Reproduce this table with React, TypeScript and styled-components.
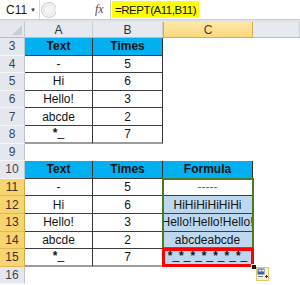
import React from 'react'
import styled, { createGlobalStyle } from 'styled-components'

const ROW_H = 17.6
const HEAD_H = 16
const ROWHEAD_W = 25
const COL_W = [68, 70, 90]

type Fill = 'none' | 'blue' | 'sky'
type Bottom = 'none' | 'dark' | 'gray'

interface ICell {
  text?: React.ReactNode
  fill?: Fill
  bold?: boolean
  line?: boolean
  bottom?: Bottom
  muted?: boolean
}

interface IRow {
  n: number
  sel?: boolean
  cells: ICell[]
}

const head = (text: string): ICell => ({ text, fill: 'blue', bold: true, line: true, bottom: 'dark' })
const body = (text: React.ReactNode, bottom: Bottom = 'dark', fill: Fill = 'none'): ICell => ({
  text,
  fill,
  line: true,
  bottom,
})

const Star = () => (
  <>
    <StarSP>*</StarSP>
    <UnderSP>_</UnderSP>
  </>
)

const ROWS: IRow[] = [
  { n: 3, cells: [head('Text'), head('Times'), {}] },
  { n: 4, cells: [body('-'), body('5'), {}] },
  { n: 5, cells: [body('Hi'), body('6'), {}] },
  { n: 6, cells: [body('Hello!'), body('3'), {}] },
  { n: 7, cells: [body('abcde'), body('2'), {}] },
  { n: 8, cells: [body(<Star />, 'gray'), body('7', 'gray'), {}] },
  { n: 9, cells: [{}, {}, {}] },
  { n: 10, cells: [head('Text'), head('Times'), head('Formula')] },
  { n: 11, sel: true, cells: [body('-'), body('5'), { ...body('-----'), muted: true }] },
  { n: 12, sel: true, cells: [body('Hi'), body('6'), body('HiHiHiHiHiHi', 'dark', 'sky')] },
  { n: 13, sel: true, cells: [body('Hello!'), body('3'), body('Hello!Hello!Hello!', 'dark', 'sky')] },
  { n: 14, sel: true, cells: [body('abcde'), body('2'), body('abcdeabcde', 'dark', 'sky')] },
  {
    n: 15,
    sel: true,
    cells: [
      body(<Star />, 'gray'),
      body('7', 'gray'),
      body(
        <>
          {Array.from({ length: 7 }).map((_, i) => (
            <Star key={i} />
          ))}
        </>,
        'gray',
        'sky'
      ),
    ],
  },
  { n: 16, cells: [{}, {}, {}] },
]

const rowTop = (n: number) => HEAD_H + (n - 3) * ROW_H
const colC = ROWHEAD_W + COL_W[0] + COL_W[1]

export default function App(): JSX.Element {
  return (
    <>
      <GlobalSCP />
      <FormulaBarSCP>
        <NameBoxSCP>
          <span>C11</span>
          <CaretSCP>▼</CaretSCP>
        </NameBoxSCP>
        <GripSCP>
          <svg width="16" height="18" viewBox="0 0 16 18">
            <circle cx="9" cy="9" r="7.5" fill="#f4f5f7" stroke="#c4c9d0" />
            <circle cx="9" cy="9" r="5" fill="none" stroke="#e1e4e8" />
          </svg>
        </GripSCP>
        <FxSCP>fx</FxSCP>
        <FormulaInputSCP>
          <FormulaMarkSCP>=REPT(A11,B11)</FormulaMarkSCP>
        </FormulaInputSCP>
      </FormulaBarSCP>
      <BandSCP />
      <SheetSCP>
        <ColHeadRowSCP>
          <CornerSCP>
            <svg width="10" height="10" viewBox="0 0 10 10">
              <polygon points="10,0 10,10 0,10" fill="#c9ced6" />
            </svg>
          </CornerSCP>
          <ColHeadSCP $w={COL_W[0]}>A</ColHeadSCP>
          <ColHeadSCP $w={COL_W[1]}>B</ColHeadSCP>
          <ColHeadSCP $w={COL_W[2]} $active>
            C
          </ColHeadSCP>
          <ColHeadSCP $w={0} $grow />
        </ColHeadRowSCP>
        {ROWS.map(row => (
          <RowSCP key={row.n}>
            <RowHeadSCP $sel={!!row.sel}>{row.n}</RowHeadSCP>
            {row.cells.map((c, i) => (
              <CellSCP
                key={i}
                $w={COL_W[i]}
                $fill={c.fill || 'none'}
                $bold={!!c.bold}
                $line={!!c.line}
                $bottom={c.bottom || 'none'}
                $muted={!!c.muted}
              >
                <CellTextSCP>{c.text}</CellTextSCP>
              </CellSCP>
            ))}
          </RowSCP>
        ))}
        <SelectionSCP
          $color="#4e7a27"
          $size={2}
          style={{ top: rowTop(11) - 1, left: colC - 1, width: COL_W[2] + 2, height: ROW_H * 4 + 1 }}
        />
        <SelectionSCP
          $color="#ff0000"
          $size={3}
          style={{ top: rowTop(15) - 1, left: colC - 1, width: COL_W[2] + 2, height: ROW_H + 1 }}
        />
        <HandleSCP style={{ top: rowTop(16) - 3, left: colC + COL_W[2] - 2 }} />
        <PasteIconSCP style={{ top: rowTop(16), left: colC + COL_W[2] + 3 }}>
          <svg width="11" height="11" viewBox="0 0 11 11">
            <rect x="0.5" y="0.5" width="7" height="6" fill="#3b5fa8" />
            <rect x="1.5" y="1.5" width="2.5" height="2" fill="#dfe8f6" />
            <rect x="4.5" y="1.5" width="2.5" height="2" fill="#dfe8f6" />
            <rect x="1" y="8" width="5" height="1" fill="#6a7a92" />
            <path d="M8 8.5h3M9.5 7v3" stroke="#333" strokeWidth="1" />
          </svg>
        </PasteIconSCP>
      </SheetSCP>
    </>
  )
}

const GlobalSCP = createGlobalStyle`
  html, body {
    margin: 0;
    padding: 0;
    background: #ffffff;
    overflow: hidden;
  }
  body {
    font-family: 'Liberation Sans', Arial, sans-serif;
    width: 300px;
    height: 285px;
  }
`

const FormulaBarSCP = styled.div`
  display: flex;
  align-items: stretch;
  height: 20px;
  background: #ffffff;
  border-bottom: 1px solid #c9ced6;
  box-sizing: border-box;
`

const NameBoxSCP = styled.div`
  width: 40px;
  display: flex;
  align-items: center;
  justify-content: space-between;
  padding: 0 3px 0 6px;
  box-sizing: border-box;
  font-size: 12px;
  color: #1a1a1a;
  border-right: 1px solid #d6dae0;
`

const CaretSCP = styled.span`
  font-size: 6px;
  color: #333;
`

const GripSCP = styled.div`
  width: 55px;
  display: flex;
  align-items: center;
`

const FxSCP = styled.div`
  width: 15px;
  display: flex;
  align-items: center;
  font-family: 'Liberation Serif', 'Times New Roman', serif;
  font-style: italic;
  font-size: 12px;
  color: #4a4a4a;
  border-right: 1px solid #c9ced6;
`

const FormulaInputSCP = styled.div`
  flex: 1;
  display: flex;
  align-items: stretch;
  padding: 1px 0 1px 1px;
`

const FormulaMarkSCP = styled.span`
  display: flex;
  align-items: center;
  background: #ffff00;
  padding: 0 3px 0 3px;
  font-size: 11.5px;
  letter-spacing: -0.45px;
  color: #111;
`

const BandSCP = styled.div`
  height: 2px;
  background: #dfe3e9;
`

const SheetSCP = styled.div`
  position: relative;
`

const ColHeadRowSCP = styled.div`
  display: flex;
  height: ${HEAD_H}px;
`

const CornerSCP = styled.div`
  width: ${ROWHEAD_W}px;
  flex-shrink: 0;
  display: flex;
  align-items: flex-end;
  justify-content: flex-end;
  padding: 0 2px 2px 0;
  box-sizing: border-box;
  background: #e4e8ee;
  border-right: 1px solid #c3c9d1;
  border-bottom: 1px solid #b4bcc7;
`

const ColHeadSCP = styled.div<{ $w: number; $active?: boolean; $grow?: boolean }>`
  width: ${p => p.$w}px;
  flex: ${p => (p.$grow ? '1' : '0 0 auto')};
  box-sizing: border-box;
  display: flex;
  align-items: center;
  justify-content: center;
  font-size: 12px;
  color: ${p => (p.$active ? '#3d3d3d' : '#27313f')};
  background: ${p => (p.$active ? 'linear-gradient(#fee9a8, #fbd77e)' : '#e6eaef')};
  border-right: 1px solid ${p => (p.$active ? '#d9ad4f' : '#c8ced6')};
  border-bottom: 1px solid ${p => (p.$active ? '#d9ad4f' : '#b4bcc7')};
  border-left: ${p => (p.$active ? '1px solid #d9ad4f' : 'none')};
`

const RowSCP = styled.div`
  display: flex;
  height: ${ROW_H}px;
`

const RowHeadSCP = styled.div<{ $sel: boolean }>`
  width: ${ROWHEAD_W}px;
  flex-shrink: 0;
  box-sizing: border-box;
  display: flex;
  align-items: center;
  justify-content: center;
  font-size: 12px;
  color: ${p => (p.$sel ? '#333' : '#3a4452')};
  background: ${p => (p.$sel ? '#f8d46f' : '#e4e8ee')};
  border-right: 1px solid ${p => (p.$sel ? '#d6a945' : '#bcc3cc')};
  border-bottom: 1px solid ${p => (p.$sel ? '#e2b95a' : '#f4f6f8')};
`

const fills: Record<Fill, string> = {
  none: '#ffffff',
  blue: '#00b0f0',
  sky: '#bdd7ee',
}

const bottoms: Record<Bottom, string> = {
  none: 'none',
  dark: '1px solid #3d3d3d',
  gray: '2px solid #9c9c9c',
}

const CellSCP = styled.div<{
  $w: number
  $fill: Fill
  $bold: boolean
  $line: boolean
  $bottom: Bottom
  $muted: boolean
}>`
  width: ${p => p.$w}px;
  flex-shrink: 0;
  box-sizing: border-box;
  overflow: hidden;
  display: flex;
  align-items: center;
  justify-content: center;
  white-space: nowrap;
  font-size: 12px;
  font-weight: ${p => (p.$bold ? 700 : 400)};
  color: ${p => (p.$muted ? '#6b6b6b' : '#141414')};
  background: ${p => fills[p.$fill]};
  border-right: ${p => (p.$line ? '1.5px solid #333333' : 'none')};
  border-bottom: ${p => bottoms[p.$bottom]};
`

const CellTextSCP = styled.span`
  display: inline-flex;
  align-items: center;
  line-height: 1;
`

const StarSP = styled.span`
  position: relative;
  top: -1px;
  font-size: 12px;
  font-weight: 700;
`

const UnderSP = styled.span`
  position: relative;
  top: -2px;
  font-size: 12px;
`

const SelectionSCP = styled.div<{ $color: string; $size: number }>`
  position: absolute;
  box-sizing: border-box;
  border: ${p => p.$size}px solid ${p => p.$color};
  pointer-events: none;
`

const HandleSCP = styled.div`
  position: absolute;
  width: 4px;
  height: 4px;
  background: #1a1a1a;
  border: 1px solid #ffffff;
`

const PasteIconSCP = styled.div`
  position: absolute;
  width: 13px;
  height: 14px;
  box-sizing: border-box;
  display: flex;
  align-items: center;
  justify-content: center;
  background: #fbf4d4;
  border: 1px solid #e3c766;
`
